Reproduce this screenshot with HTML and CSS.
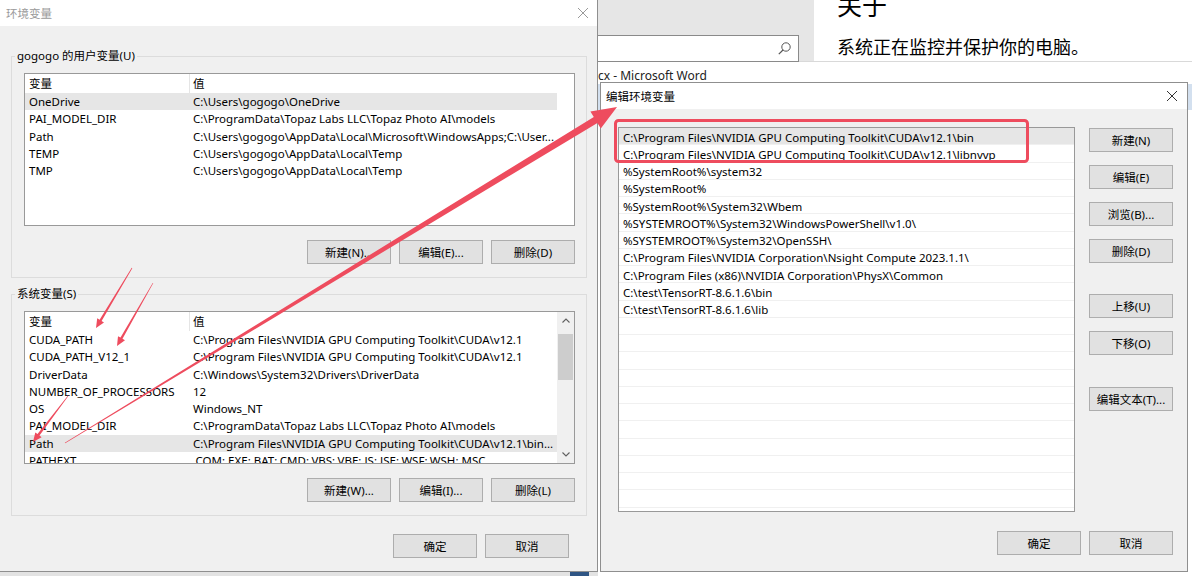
FILE: index.html
```html
<!DOCTYPE html>
<html lang="zh-CN">
<head>
  <meta charset="UTF-8" />
  <title>环境变量</title>
  <link rel="stylesheet" href="styles.css">
</head>
<body>
  <div class="desktop">

    <!-- windows behind the dialogs -->
    <div class="win settings">
      <div class="nav">
        <div class="search">
          <svg width="13" height="13" viewBox="0 0 13 13"><circle cx="8" cy="5" r="4.2" fill="none" stroke="#555" stroke-width="1"/><line x1="5" y1="8" x2="0.8" y2="12.2" stroke="#555" stroke-width="1.2"/></svg>
        </div>
      </div>
      <div class="page">
        <div class="page-title">关于</div>
        <div class="page-text">系统正在监控并保护你的电脑。</div>
      </div>
    </div>

    <div class="win word">
      <div class="word-title">cx - Microsoft Word</div>
      <div class="word-ribbon"></div>
    </div>

    <div class="taskbar-bit"></div>

    <!-- 环境变量 -->
    <div class="dlg env">
      <div class="titlebar inactive">
        <span>环境变量</span>
        <svg class="close" width="10" height="10" viewBox="0 0 10 10"><path d="M0 0L10 10M10 0L0 10" stroke="#9a9a9a" stroke-width="1"/></svg>
      </div>

      <div class="group">
        <div class="group-label">gogogo 的用户变量(U)</div>
        <div class="listview">
          <div class="lv-cols">
            <div class="lv-head"><div class="c1">变量</div><div class="c2">值</div></div>
            <div class="lv-row sel"><div class="c1">OneDrive</div><div class="c2">C:\Users\gogogo\OneDrive</div></div>
            <div class="lv-row"><div class="c1">PAI_MODEL_DIR</div><div class="c2">C:\ProgramData\Topaz Labs LLC\Topaz Photo AI\models</div></div>
            <div class="lv-row"><div class="c1">Path</div><div class="c2">C:\Users\gogogo\AppData\Local\Microsoft\WindowsApps;C:\User...</div></div>
            <div class="lv-row"><div class="c1">TEMP</div><div class="c2">C:\Users\gogogo\AppData\Local\Temp</div></div>
            <div class="lv-row"><div class="c1">TMP</div><div class="c2">C:\Users\gogogo\AppData\Local\Temp</div></div>
          </div>
        </div>
        <div class="btn-row">
          <button class="btn">新建(N)...</button>
          <button class="btn">编辑(E)...</button>
          <button class="btn">删除(D)</button>
        </div>
      </div>

      <div class="group">
        <div class="group-label">系统变量(S)</div>
        <div class="listview">
          <div class="lv-cols">
            <div class="lv-head"><div class="c1">变量</div><div class="c2">值</div></div>
            <div class="lv-row"><div class="c1">CUDA_PATH</div><div class="c2">C:\Program Files\NVIDIA GPU Computing Toolkit\CUDA\v12.1</div></div>
            <div class="lv-row"><div class="c1">CUDA_PATH_V12_1</div><div class="c2">C:\Program Files\NVIDIA GPU Computing Toolkit\CUDA\v12.1</div></div>
            <div class="lv-row"><div class="c1">DriverData</div><div class="c2">C:\Windows\System32\Drivers\DriverData</div></div>
            <div class="lv-row"><div class="c1">NUMBER_OF_PROCESSORS</div><div class="c2">12</div></div>
            <div class="lv-row"><div class="c1">OS</div><div class="c2">Windows_NT</div></div>
            <div class="lv-row"><div class="c1">PAI_MODEL_DIR</div><div class="c2">C:\ProgramData\Topaz Labs LLC\Topaz Photo AI\models</div></div>
            <div class="lv-row sel"><div class="c1">Path</div><div class="c2">C:\Program Files\NVIDIA GPU Computing Toolkit\CUDA\v12.1\bin...</div></div>
            <div class="lv-row"><div class="c1">PATHEXT</div><div class="c2">.COM;.EXE;.BAT;.CMD;.VBS;.VBE;.JS;.JSE;.WSF;.WSH;.MSC</div></div>
          </div>
          <div class="vscroll">
            <div class="sb-arrow"><svg width="8" height="5" viewBox="0 0 8 5"><path d="M0.5 4.5L4 1L7.5 4.5" fill="none" stroke="#606060" stroke-width="1.1"/></svg></div>
            <div class="sb-track"><div class="sb-thumb"></div></div>
            <div class="sb-arrow"><svg width="8" height="5" viewBox="0 0 8 5"><path d="M0.5 0.5L4 4L7.5 0.5" fill="none" stroke="#606060" stroke-width="1.1"/></svg></div>
          </div>
        </div>
        <div class="btn-row">
          <button class="btn">新建(W)...</button>
          <button class="btn">编辑(I)...</button>
          <button class="btn">删除(L)</button>
        </div>
      </div>

      <div class="env-footer">
        <button class="btn">确定</button>
        <button class="btn">取消</button>
      </div>
    </div>

    <!-- 编辑环境变量 -->
    <div class="dlg edit">
      <div class="titlebar">
        <span>编辑环境变量</span>
        <svg class="close" width="10" height="10" viewBox="0 0 10 10"><path d="M0 0L10 10M10 0L0 10" stroke="#333" stroke-width="1"/></svg>
      </div>
      <div class="edit-body">
        <div class="pathlist">
          <div class="path-row sel">C:\Program Files\NVIDIA GPU Computing Toolkit\CUDA\v12.1\bin</div>
          <div class="path-row">C:\Program Files\NVIDIA GPU Computing Toolkit\CUDA\v12.1\libnvvp</div>
          <div class="path-row">%SystemRoot%\system32</div>
          <div class="path-row">%SystemRoot%</div>
          <div class="path-row">%SystemRoot%\System32\Wbem</div>
          <div class="path-row">%SYSTEMROOT%\System32\WindowsPowerShell\v1.0\</div>
          <div class="path-row">%SYSTEMROOT%\System32\OpenSSH\</div>
          <div class="path-row">C:\Program Files\NVIDIA Corporation\Nsight Compute 2023.1.1\</div>
          <div class="path-row">C:\Program Files (x86)\NVIDIA Corporation\PhysX\Common</div>
          <div class="path-row">C:\test\TensorRT-8.6.1.6\bin</div>
          <div class="path-row">C:\test\TensorRT-8.6.1.6\lib</div>
          <div class="path-row"></div>
          <div class="path-row"></div>
          <div class="path-row"></div>
          <div class="path-row"></div>
          <div class="path-row"></div>
          <div class="path-row"></div>
          <div class="path-row"></div>
          <div class="path-row"></div>
          <div class="path-row"></div>
          <div class="path-row"></div>
          <div class="path-row"></div>
          <div class="path-row"></div>
        </div>
        <div class="side">
          <button class="btn">新建(N)</button>
          <button class="btn">编辑(E)</button>
          <button class="btn">浏览(B)...</button>
          <button class="btn">删除(D)</button>
          <button class="btn sep">上移(U)</button>
          <button class="btn">下移(O)</button>
          <button class="btn sep2">编辑文本(T)...</button>
        </div>
        <div class="edit-footer">
          <button class="btn">确定</button>
          <button class="btn">取消</button>
        </div>
      </div>
    </div>

    <!-- red marks drawn over the screenshot -->
    <svg class="marks" width="1192" height="576" viewBox="0 0 1192 576">
      <rect x="615.5" y="120.5" width="412" height="41" rx="3" fill="none" stroke="#ee4c5e" stroke-width="3"/>
      <polygon fill="#ee4c5e" points="64.8,442.7 593.8,117.0 590.4,111.5 617,107 600.8,128.5 597.4,123.0 65.2,443.3"/>
      <polygon fill="#ee4c5e" points="131.7,267.8 99.6,319.7 97.2,318.2 96,328 104.0,322.4 101.6,320.9 132.3,268.2"/>
      <polygon fill="#ee4c5e" points="152.7,282.9 120.5,337.6 118.0,336.2 117,346 125.0,340.2 122.5,338.8 153.3,283.1"/>
      <polygon fill="#ee4c5e" points="67.8,395.8 37.5,434.1 35.3,432.4 33,442 41.6,437.2 39.5,435.5 68.2,396.2"/>
    </svg>
  </div>
</body>
</html>
```

FILE: styles.css
```css
* {
  box-sizing: border-box;
}
body {
  margin: 0;
  font-family: "Noto Sans", "Noto Sans CJK SC", sans-serif;
  font-size: 11.5px;
  color: #000;
}
.desktop {
  position: relative;
  width: 1192px;
  height: 576px;
  overflow: hidden;
  background: #e3e3e3;
}
.win, .dlg, .taskbar-bit, .marks {
  position: absolute;
}

/* back windows */
.settings {
  left: 598px;
  top: 0;
  width: 594px;
  height: 62px;
  display: flex;
  background: #fff;
  border-bottom: 1px solid #d9d9d9;
}
.nav {
  width: 216px;
  background: #e6e6e6;
  padding-top: 35px;
}
.search {
  width: 201px;
  height: 27px;
  background: #fff;
  border: 1px solid #8a8a8a;
  border-left: none;
  display: flex;
  justify-content: flex-end;
  align-items: center;
  padding-right: 7px;
}
.page {
  flex: 1;
  padding-left: 23px;
}
.page-title {
  font-size: 25px;
  line-height: 30px;
  margin-top: -10px;
}
.page-text {
  font-size: 18px;
  line-height: 24px;
  margin-top: 15px;
}
.word {
  left: 598px;
  top: 62px;
  width: 594px;
  height: 514px;
  background: #fff;
}
.word-title {
  height: 22px;
  padding-top: 4px;
  line-height: 20px;
  font-size: 12px;
  color: #222;
}
.word-ribbon {
  height: 26px;
  background: #d3e0ef;
}
.taskbar-bit {
  left: 570px;
  top: 572px;
  width: 19px;
  height: 4px;
  background: #2f5584;
}

/* dialogs */
.dlg {
  background: #f0f0f0;
  border: 1px solid #8f8f8f;
}
.env {
  left: 0;
  top: 0;
  width: 598px;
  height: 572px;
  border-width: 0 1px 1px 0;
}
.edit {
  left: 600px;
  top: 82px;
  width: 588px;
  height: 490px;
}
.titlebar {
  height: 26px;
  background: #fff;
  display: flex;
  align-items: center;
  justify-content: space-between;
  padding: 0 9px 0 6px;
}
.titlebar.inactive {
  color: #9a9a9a;
}
.edit .titlebar {
  padding: 0 10px 0 5px;
}

.group {
  margin: 30px 10px 0 11px;
  border: 1px solid #dcdcdc;
  padding: 0 11px 13px 12px;
}
.group + .group {
  margin-top: 16px;
}
.group-label {
  width: max-content;
  margin: -9px 0 0 -9px;
  padding: 0 2px;
  line-height: 16px;
  background: #f0f0f0;
}
.listview {
  margin-top: 9px;
  height: 153px;
  border: 1px solid #999;
  background: #fff;
  overflow: hidden;
  display: flex;
}
.lv-cols {
  width: 532px;
}
.lv-head, .lv-row {
  display: flex;
}
.lv-head {
  height: 19px;
  line-height: 19px;
}
.lv-head .c1 {
  border-right: 1px solid #e5e5e5;
}
.lv-row {
  height: 17.25px;
  line-height: 17.25px;
}
.lv-row.sel, .path-row.sel {
  background: #e6e6e6;
}
.c1, .c2 {
  white-space: nowrap;
  overflow: hidden;
}
.c1 {
  width: 165px;
  padding-left: 4px;
}
.c2 {
  width: 367px;
  padding-left: 3px;
}
.vscroll {
  width: 17px;
  margin-left: auto;
  background: #f0f0f0;
  display: flex;
  flex-direction: column;
}
.sb-arrow {
  height: 17px;
  display: flex;
  align-items: center;
  justify-content: center;
}
.sb-track {
  flex: 1;
}
.sb-thumb {
  margin: 5px 1px 0;
  height: 46px;
  background: #cdcdcd;
}

.btn-row, .env-footer, .edit-footer {
  display: flex;
  justify-content: flex-end;
  gap: 8px;
}
.btn-row {
  margin-top: 14px;
}
.env-footer {
  margin-top: 18px;
  padding-right: 28px;
}
.btn {
  width: 84px;
  height: 24px;
  padding: 0;
  background: #e1e1e1;
  border: 1px solid #adadad;
  font: inherit;
  color: #000;
}

.edit-body {
  display: grid;
  grid-template-columns: 457px 84px;
  column-gap: 14px;
  padding: 18px 14px 0 17px;
}
.pathlist {
  height: 385px;
  border: 1px solid #999;
  background: #fff;
  overflow: hidden;
}
.path-row {
  height: 17.25px;
  padding: 1.5px 0 0 4px;
  line-height: 15.75px;
  border-bottom: 1px solid #f0f0f0;
  white-space: nowrap;
}
.side {
  display: flex;
  flex-direction: column;
  gap: 13px;
  padding-top: 1px;
}
.side .sep {
  margin-top: 18px;
}
.side .sep2 {
  margin-top: 19px;
}
.edit-footer {
  grid-column: 1 / -1;
  margin-top: 19px;
}

.marks {
  left: 0;
  top: 0;
  pointer-events: none;
}
```
